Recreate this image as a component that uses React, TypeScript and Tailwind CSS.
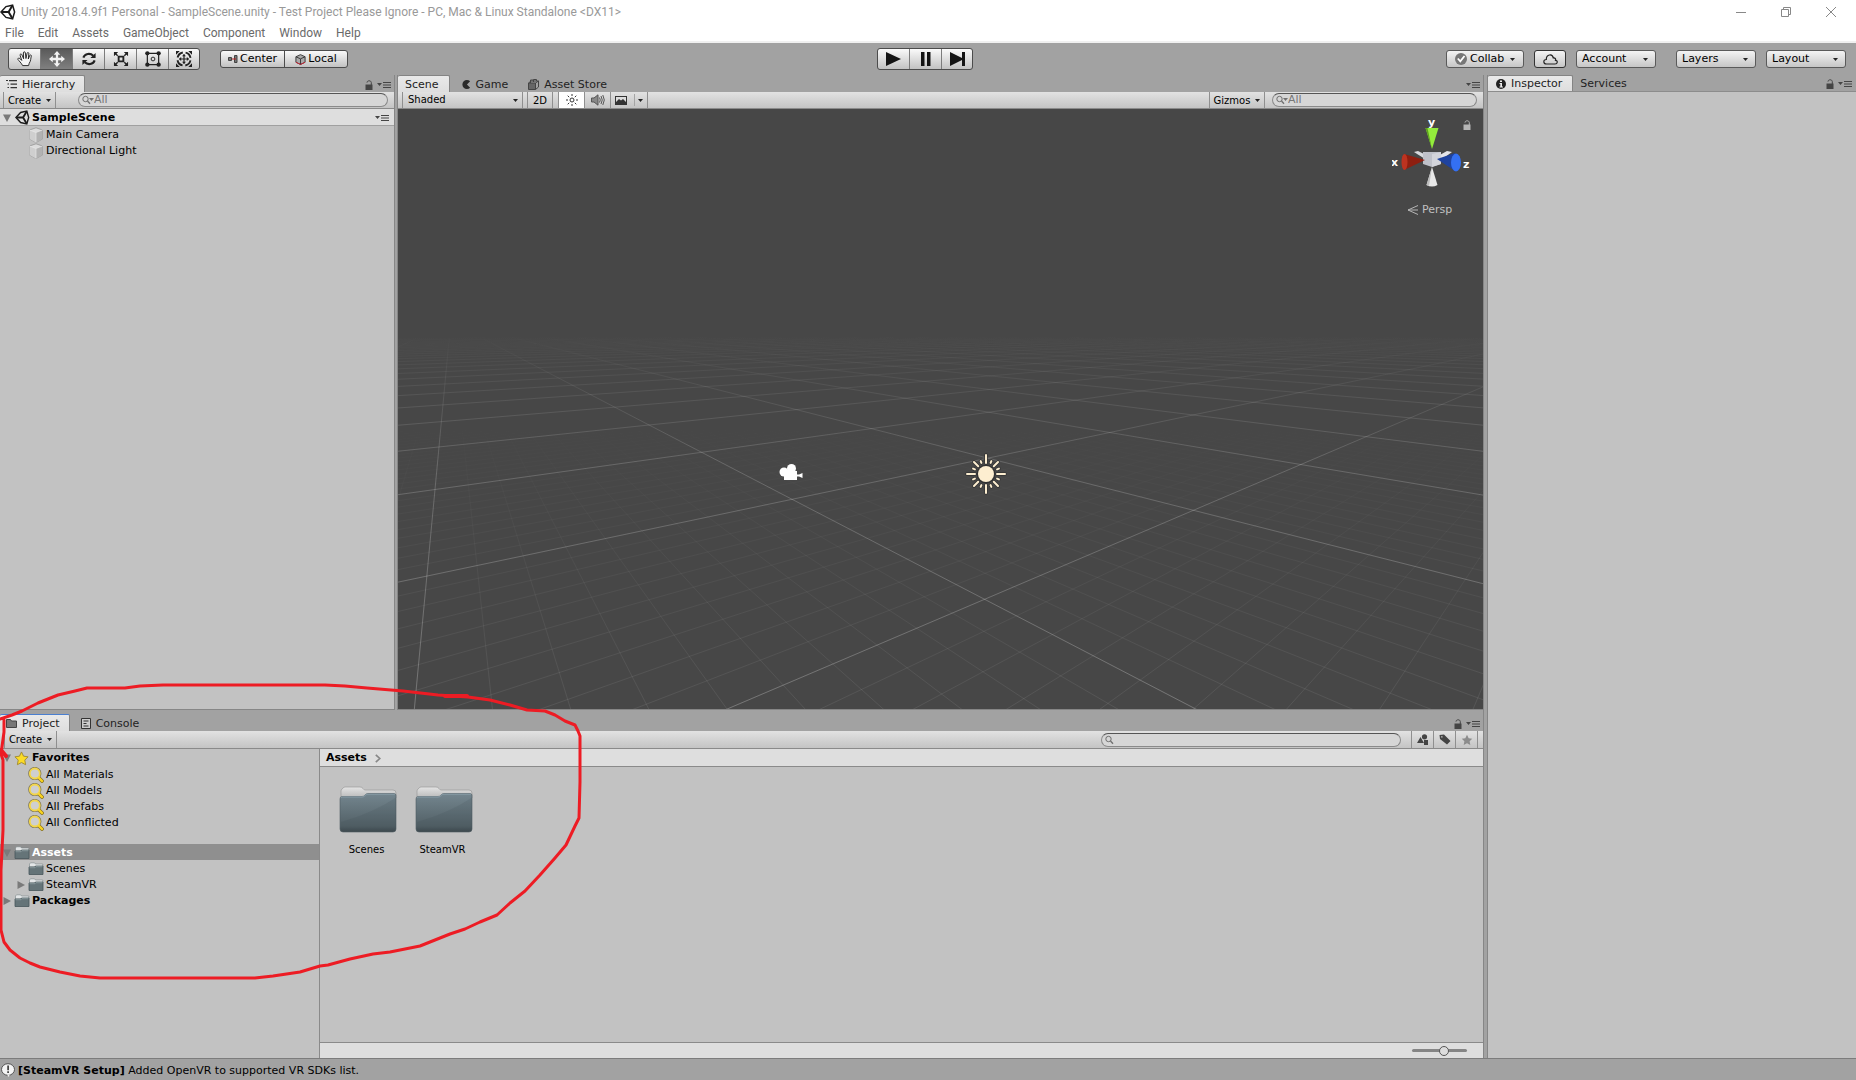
import { useState } from "react";
import type { ReactNode } from "react";
import clsx from "clsx";

const menus = ["File", "Edit", "Assets", "GameObject", "Component", "Window", "Help"];

const favorites = ["All Materials", "All Models", "All Prefabs", "All Conflicted"];

/* ---------- icons ---------- */

function UnityLogo({ className }: { className?: string }) {
  return (
    <svg viewBox="0 0 16 16" className={className} fill="none" stroke="#1c1c1c">
      <path d="M1 8 6 2.6 12.6 1.2 14.6 8l-2 6.8L6 13.4z" strokeWidth="1.5" />
      <path d="M2 8h6.6M8.6 8l3.8-6.4M8.6 8l3.8 6.4" strokeWidth="2" />
    </svg>
  );
}

function Lock({ className }: { className?: string }) {
  return (
    <svg viewBox="0 0 8 10" className={clsx("h-[10px] w-2", className)}>
      <path d="M0.5 4.5h7V10h-7z" fill="currentColor" />
      <path d="M2 2.6C2 .2 6.3 .2 6.3 2.6V5" fill="none" stroke="currentColor" />
    </svg>
  );
}

function PaneMenu() {
  return (
    <svg viewBox="0 0 14 8" className="h-2 w-[14px]" fill="#444">
      <path d="M0 2h5L2.5 5zM6 1h8v1H6zM6 3.5h8v1H6zM6 6h8v1H6z" />
    </svg>
  );
}

function Caret() {
  return (
    <svg viewBox="0 0 5 3" className="h-[3px] w-[5px] shrink-0" fill="#222">
      <path d="M0 0h5L2.5 3z" />
    </svg>
  );
}

function Foldout({ open }: { open?: boolean }) {
  return (
    <svg viewBox="0 0 10 10" className="size-[10px] shrink-0" fill="#7a7a7a">
      {open ? <path d="M1 1.5h8L5 9z" /> : <path d="M1.5 1 9 5 1.5 9z" />}
    </svg>
  );
}

function Cube() {
  return (
    <svg viewBox="0 0 16 16" className="size-4 shrink-0">
      <path d="M8 .8 14.5 3v9L8 15.5 1.5 12V3z" fill="#dcdcdc" stroke="#8b8b8b" strokeWidth=".7" />
      <path d="M1.5 3 8 5.5V15.5L1.5 12z" fill="#cfcfcf" />
      <path d="M14.5 3 8 5.5V15.5L14.5 12z" fill="#b2b2b2" />
      <path d="M1.5 3 8 5.5 14.5 3M8 5.5v10" stroke="#ececec" strokeWidth=".6" fill="none" />
    </svg>
  );
}

function SmallFolder() {
  return (
    <svg viewBox="0 0 16 14" className="h-[14px] w-4 shrink-0">
      <path d="M1.5 4V2l1-1.2h4L7.5 2h7.300v3H1.500z" fill="#e3e6e7" stroke="#7b8588" strokeWidth=".6" />
      <path d="M1 5h5.500l1-1H15V12.500H1z" fill="#657478" stroke="#47555a" strokeWidth=".8" />
      <path d="M1.500 5.700h5.500l1-1h6.500" stroke="#92a1a5" strokeWidth=".8" fill="none" />
    </svg>
  );
}

function BigFolder() {
  return (
    <svg viewBox="0 0 58 48" className="h-12 w-[58px]">
      <defs>
        <linearGradient id="folderBody" x1="0" y1="0" x2="0" y2="1">
          <stop offset="0" stopColor="#74868f" />
          <stop offset=".85" stopColor="#526066" />
          <stop offset="1" stopColor="#3d484d" />
        </linearGradient>
        <linearGradient id="folderTab" x1="0" y1="0" x2="0" y2="1">
          <stop offset="0" stopColor="#e4e4e4" />
          <stop offset="1" stopColor="#b9b9b9" />
        </linearGradient>
      </defs>
      <path d="M2 11V5q0-1 1-2l1-1q1-1 2-1h15q2 0 3 1.5L25.5 4H54q3 0 3 3v5H2z" fill="url(#folderTab)" stroke="#9b9b9b" strokeWidth=".7" />
      <path d="M1 13q0-2.5 2-2.5h20q2 0 3-1.5t3-1.5h26q2 0 2 2V43q0 3-3 3H4q-3 0-3-3z" fill="url(#folderBody)" stroke="#4d5b61" strokeWidth=".6" />
      <path d="M57 11.5V43q0 2-2 2H4q-2 0-2-2v-7Q34 27 57 11.5z" fill="#3b474c" opacity=".14" />
      <path d="M2 12q0-1 1.5-1H23q2 0 3-1.5T29 8.2h27" fill="none" stroke="#8fa5b0" strokeWidth=".8" />
    </svg>
  );
}

function Star({ className, fill, stroke }: { className?: string; fill: string; stroke?: string }) {
  return (
    <svg viewBox="0 0 16 16" className={className}>
      <path d="M8 1l2.2 4.5 4.8.7-3.5 3.5.9 4.9L8 12.3l-4.4 2.3.9-4.9L1 6.2l4.8-.7z" fill={fill} stroke={stroke} strokeLinejoin="round" />
    </svg>
  );
}

function Magnifier() {
  return (
    <svg viewBox="0 0 16 16" className="size-4 shrink-0" fill="none">
      <path d="M10.5 10.5 14 14" stroke="#8a7420" strokeWidth="3.800" strokeLinecap="round" />
      <circle cx="6.800" cy="6.500" r="5" stroke="#7d7556" strokeWidth="3.200" />
      <path d="M10.500 10.500 14 14" stroke="#fbd51f" strokeWidth="2.400" strokeLinecap="round" />
      <circle cx="6.800" cy="6.500" r="5" stroke="#f3d64a" strokeWidth="1.800" fill="#cfcfcf" />
    </svg>
  );
}

function SearchGlyph({ menu }: { menu?: boolean }) {
  return (
    <svg viewBox="0 0 12 10" className="h-[10px] w-3 shrink-0" fill="none" stroke="#707070">
      <circle cx="3.5" cy="4" r="2.7" />
      <path d="M5.5 6 8 8.8" strokeWidth="1.3" />
      {menu && <path d="M7 3h5L9.5 6z" fill="#707070" stroke="none" />}
    </svg>
  );
}

const toolIcons: { name: string; icon: ReactNode }[] = [
  {
    name: "Hand",
    icon: (
      <path
        d="M6 15.5C4.500 12.500 2 10.500 1 9c-.5-1.300 1-1.900 2-1l2 2L3.300 4.500c-.3-1.500 1.400-1.900 1.900-.5L7 8.200 6.800 2c0-1.500 1.900-1.500 2.100 0l.6 6 1.200-5.600c.4-1.300 2-.9 1.900.5L12 8.500l1.500-3.700c.6-1.200 2-.6 1.700.6C14.500 8 14.800 10.500 13 13l-.7 2.500z"
        fill="#f4f4f4"
        stroke="#222"
        strokeWidth="1"
      />
    ),
  },
  {
    name: "Move",
    icon: <path d="M8.5 0 12 4H9.7v3.300H13V5l4 3.500L13 12V9.700H9.700V13H12l-3.500 4L5 13h2.300V9.700H4V12L0 8.500 4 5v2.300h3.300V4H5z" fill="#f2f2f2" />,
  },
  {
    name: "Rotate",
    icon: (
      <g fill="none" stroke="#222" strokeWidth="2.2">
        <path d="M2.500 7C4 2.500 10 2 13 5M14.500 10C13 14.500 7 15 4 12" />
        <path d="M15.500 2v5.500H10zM1.500 15V9.500H7z" fill="#222" stroke="none" />
      </g>
    ),
  },
  {
    name: "Scale",
    icon: (
      <g fill="none" stroke="#222">
        <path d="M6 6h5v5H6z" strokeWidth="2" />
        <path d="M2 2l3 3M15 2l-3 3M2 15l3-3M15 15l-3-3" strokeWidth="1.5" />
        <path d="M1 1h4.500L1 5.500zM16 1v4.500L11.500 1zM1 16v-4.500L5.500 16zM16 16h-4.500L16 11.500z" fill="#222" stroke="none" />
      </g>
    ),
  },
  {
    name: "Rect",
    icon: (
      <g fill="none" stroke="#222">
        <path d="M2.500 2.500h12v12h-12z" strokeWidth="1.300" />
        <circle cx="8.500" cy="8.500" r="2" />
        <g fill="#222" stroke="none">
          <circle cx="2.500" cy="2.500" r="2.300" />
          <circle cx="14.500" cy="2.500" r="2.300" />
          <circle cx="2.500" cy="14.500" r="2.300" />
          <circle cx="14.500" cy="14.500" r="2.300" />
        </g>
      </g>
    ),
  },
  {
    name: "Transform",
    icon: (
      <g fill="none" stroke="#222">
        <circle cx="8.500" cy="8.500" r="7" strokeWidth="2" strokeDasharray="8 3" strokeDashoffset="-1.500" />
        <path d="M8.500 4v9M4 8.500h9" strokeWidth="1.300" />
        <path d="M8.500 3 10.500 5.500h-4zM8.500 14l2-2.500h-4zM3 8.500 5.500 6.500v4zM14 8.500l-2.500-2v4zM0 0h4L0 4zM17 0v4L13 0zM0 17v-4L4 17zM17 17h-4l4-4z" fill="#222" stroke="none" />
      </g>
    ),
  },
];

/* ---------- scene view ---------- */

// Ground plane projected to the screen. w is the depth term, y = HORIZON + DEPTH / w
const PLANE = { a: 773, b: 254.2, c: 984.6, g: 0.4727, h: 0.564 };
const HORIZON = 322;
const DEPTH = 277.3;

function groundLine(axis: "u" | "v", k: number, near: number, far: number) {
  const { a, b, c, g, h } = PLANE;
  const at = (w: number) => {
    const u = axis === "u" ? k : (w - 1 - h * k) / g;
    const v = axis === "u" ? (w - 1 - g * k) / h : k;
    return `${((a * u + b * v + c) / w).toFixed(1)} ${(HORIZON + DEPTH / w).toFixed(1)}`;
  };
  return `M${at(near)}L${at(far)}`;
}

function range(from: number, to: number) {
  return Array.from({ length: to - from + 1 }, (_, i) => from + i);
}

const majorGrid = [
  ...range(-22, 30).map((k) => groundLine("u", k, 0.68, 18)),
  ...range(-30, 30).map((k) => groundLine("v", k, 0.68, 18)),
].join("");

const minorGrid = [
  ...range(-40, 60).map((k) => groundLine("u", k / 10, 0.68, 3)),
  ...range(-40, 60).map((k) => groundLine("v", k / 10, 0.68, 3)),
].join("");

function SceneCanvas() {
  return (
    <svg viewBox="398 109 1085 600" preserveAspectRatio="xMidYMid slice" className="absolute inset-0 size-full">
      <defs>
        <linearGradient id="majorFade" gradientUnits="userSpaceOnUse" x1="0" y1="335" x2="0" y2="709">
          <stop offset="0" stopColor="#fff" stopOpacity="0" />
          <stop offset=".1" stopColor="#fff" stopOpacity=".05" />
          <stop offset=".35" stopColor="#fff" stopOpacity=".17" />
          <stop offset="1" stopColor="#fff" stopOpacity=".19" />
        </linearGradient>
        <linearGradient id="minorFade" gradientUnits="userSpaceOnUse" x1="0" y1="420" x2="0" y2="709">
          <stop offset="0" stopColor="#fff" stopOpacity="0" />
          <stop offset="1" stopColor="#fff" stopOpacity=".08" />
        </linearGradient>
      </defs>
      <path d={minorGrid} stroke="url(#minorFade)" fill="none" />
      <path d={majorGrid} stroke="url(#majorFade)" fill="none" />

      {/* camera gizmo */}
      <g fill="#fff">
        <circle cx="784" cy="472" r="4.5" />
        <circle cx="791.5" cy="468.5" r="4.5" />
        <path d="M783 471h14v3.500h2l3.500-1.500v5l-3.500-1.500h-2V480h-13v-4z" />
      </g>

      {/* directional light gizmo */}
      <g transform="translate(986 474)" stroke="#fdeed0" strokeWidth="2" strokeLinecap="round">
        <circle r="9.5" fill="#333" stroke="none" />
        <circle r="8" fill="#fdeed0" stroke="none" />
        {range(0, 15).map((i) => {
          const len = i % 4 === 0 ? 19 : i % 2 === 0 ? 17 : 14;
          const from = i % 2 === 0 ? 11 : 12;
          return (
            <g key={i} transform={`rotate(${i * 22.5})`}>
              <path d={`M${from} 0H${len}`} stroke="#333" strokeWidth="3.5" />
              <path d={`M${from} 0H${len}`} />
            </g>
          );
        })}
      </g>
    </svg>
  );
}

function AxisGizmo() {
  return (
    <div className="absolute top-2 right-[3px] w-[88px] text-[#ddd]">
      <svg viewBox="1392 118 88 76" className="h-[76px] w-[88px]">
        <path d="M1414 153l4-1 8 4-1 4z" fill="#d8dade" />
        <path d="M1452 153l-5-1-9 5 3 4z" fill="#e4e4e8" />
        <path d="M1425.5 129h13L1432 150z" fill="#94ec3c" />
        <path d="M1425.5 129h2l4.500 21z" fill="#5ea01f" />
        <path d="M1423 153h18v12l-9 3-9-3z" fill="#bfc1c9" />
        <path d="M1432 155l9-2v12l-9 3z" fill="#d3d4da" />
        <path d="M1432 168l5.500 18q-5.500 3-11 0z" fill="#e9e9e9" />
        <path d="M1432 168l-3 19-2.500-1z" fill="#bcbcbc" />
        <path d="M1425 161l-21-6v16z" fill="#8e1f10" />
        <ellipse cx="1404.500" cy="163" rx="3" ry="8" fill="#bd3320" />
        <path d="M1437 160l18-6v18z" fill="#1f439f" />
        <ellipse cx="1456" cy="163.500" rx="5" ry="9" fill="#3470f2" />
        <g fill="#fff" fontSize="11" fontWeight="700">
          <text x="1428" y="127">y</text>
          <text x="1391" y="167">x</text>
          <text x="1463" y="169">z</text>
        </g>
      </svg>
      <Lock className="absolute top-[3px] right-[9px] text-[#b5b5b5]" />
      <button type="button" className="mt-[9px] ml-4 flex items-center gap-1 text-[11px] text-[#c0c0c0]">
        <svg viewBox="0 0 10 10" className="size-[10px]" fill="none" stroke="#b5b5b5">
          <path d="M10 .5 0 5l10 4.500M0 5h10" />
        </svg>
        Persp
      </button>
    </div>
  );
}

/* ---------- shared pieces ---------- */

const strip = "flex h-[17px] items-center border-b border-[#8a8a8a] bg-linear-to-b from-[#e2e2e2] to-[#c4c4c4]";
const tabRow = "flex h-[17px] items-center bg-[#a2a2a2]";
const treeRow = "flex h-4 items-center pt-[2px]";

function Tab({ active, focused, icon, children }: { active?: boolean; focused?: boolean; icon?: ReactNode; children: ReactNode }) {
  return (
    <button
      type="button"
      role="tab"
      aria-selected={!!active}
      className={clsx(
        "flex h-full items-center gap-[5px] border-t px-[7px] pt-px text-[11px] leading-4 text-[#222]",
        active && "rounded-t-xs border-r bg-linear-to-b from-[#e9e9e9] to-[#dedede]",
        active ? (focused ? "border-[#848484] border-t-[#4a7fd0]" : "border-[#848484]") : "border-transparent",
      )}
    >
      {icon}
      {children}
    </button>
  );
}

function StripButton({ label, children, className }: { label?: string; children: ReactNode; className?: string }) {
  return (
    <button type="button" aria-label={label} className={clsx("flex h-full items-center justify-center border-r border-[#8f8f8f]", className)}>
      {children}
    </button>
  );
}

function SearchField({ label, text, className }: { label: string; text?: string; className?: string }) {
  return (
    <label className={clsx("flex h-[14px] items-center rounded-full border border-[#8a8a8a] border-t-[#555] bg-[#d6d6d6] pl-[3px]", className)}>
      <SearchGlyph menu={!!text} />
      <input aria-label={label} placeholder={text} className="h-3 w-full min-w-0 bg-transparent text-[11px] leading-3 outline-none placeholder:text-[#777]" />
    </label>
  );
}

function Dropdown({ label, className }: { label: string; className?: string }) {
  return (
    <div className={clsx("relative h-[18px] rounded-[3px] border border-[#5a5a5a] bg-linear-to-b from-[#f4f4f4] to-[#c6c6c6]", className)}>
      <select aria-label={label} className="block h-4 w-full appearance-none pl-[5px] text-[11px] leading-4 outline-none">
        <option>{label}</option>
      </select>
      <span className="pointer-events-none absolute inset-y-0 right-[7px] flex items-center">
        <Caret />
      </span>
    </div>
  );
}

/* ---------- panels ---------- */

function Toolbar() {
  const [tool, setTool] = useState("Move");
  const segment = "flex overflow-hidden rounded-[3px] border border-[#4c4c4c] bg-linear-to-b from-[#fafafa] to-[#c2c2c2]";

  return (
    <div className="relative flex h-8 items-start bg-[#a2a2a2] px-2 pt-[5px]">
      <div className={clsx(segment, "h-[22px]")}>
        {toolIcons.map(({ name, icon }) => (
          <button
            key={name}
            type="button"
            aria-label={name}
            onClick={() => setTool(name)}
            className={clsx(
              "flex w-8 items-center justify-center border-r border-[#7c7c7c] last:w-[30px] last:border-r-0",
              tool === name && "bg-linear-to-b from-[#5a5a5a] to-[#808080]",
            )}
          >
            <svg viewBox="0 0 17 17" className="size-4">{icon}</svg>
          </button>
        ))}
      </div>

      <div className={clsx(segment, "mt-[2px] ml-5 h-[18px] text-[11px] leading-4")}>
        <button type="button" className="flex w-16 items-center justify-center gap-[2px] border-r border-[#4c4c4c]">
          <svg viewBox="0 0 10 8" className="h-2 w-[10px]" fill="none" stroke="#444">
            <path d="M.5 2.500h3v3h-3zM6.500.5h2.500v7H6.500z" fill="#777" />
            <path d="M4 4h4" stroke="#b22" />
          </svg>
          Center
        </button>
        <button type="button" className="flex w-[62px] items-center justify-center gap-[2px]">
          <svg viewBox="0 0 12 12" className="size-[11px]" fill="none" stroke="#333">
            <path d="M6 .7 11 3v6L6 11.400 1 9V3z" fill="#aaa" />
            <path d="M1 3l5 2.300L11 3M6 5.500v6" />
            <path d="M1 9l5 2.400L11 9" stroke="#c23" />
          </svg>
          Local
        </button>
      </div>

      <div className={clsx(segment, "absolute top-[5px] left-[calc(50%-51px)] h-[22px]")}>
        <button type="button" aria-label="Play" className="flex w-8 items-center justify-center border-r border-[#7c7c7c]">
          <svg viewBox="0 0 15 14" className="h-[14px] w-[15px]" fill="#141414"><path d="M0 0l15 7-15 7z" /></svg>
        </button>
        <button type="button" aria-label="Pause" className="flex w-8 items-center justify-center border-r border-[#7c7c7c]">
          <svg viewBox="0 0 10 14" className="h-[14px] w-[10px]" fill="#141414"><path d="M0 0h3.500v14H0zM6 0h3.500v14H6z" /></svg>
        </button>
        <button type="button" aria-label="Step" className="flex w-[30px] items-center justify-center">
          <svg viewBox="0 0 15 14" className="h-[14px] w-[15px]" fill="#141414"><path d="M0 0l12 6V0h3v14h-3V8L0 14z" /></svg>
        </button>
      </div>

      <div className="mt-[2px] ml-auto flex gap-[10px] pr-[2px]">
        <button type="button" className="flex h-[18px] w-[78px] items-center gap-[3px] rounded-[3px] border border-[#5a5a5a] bg-linear-to-b from-[#f4f4f4] to-[#c6c6c6] pl-2 text-[11px] leading-4">
          <svg viewBox="0 0 12 12" className="size-3">
            <circle cx="6" cy="6" r="6" fill="#777" />
            <path d="M2.800 5.500l2.500 2.800L9.500 3" fill="none" stroke="#fff" strokeWidth="1.800" />
          </svg>
          Collab
          <span className="ml-[3px]"><Caret /></span>
        </button>
        <button type="button" aria-label="Cloud services" className="flex h-[18px] w-8 items-center justify-center rounded-[3px] border border-[#333] bg-linear-to-b from-[#f4f4f4] to-[#c6c6c6]">
          <svg viewBox="0 0 15 11" className="h-[11px] w-[15px]" fill="none" stroke="#222" strokeWidth="1.2">
            <path d="M3.500 10C0 10 0 5.500 3.300 5.500 3.300 0 9.500-.5 10.300 4 12 3.600 13 5 12.500 6.300 15 6.500 14.800 10 12 10z" />
          </svg>
        </button>
        <Dropdown label="Account" className="w-20" />
        <Dropdown label="Layers" className="ml-[10px] w-20" />
        <Dropdown label="Layout" className="w-20" />
      </div>
    </div>
  );
}

function Hierarchy() {
  return (
    <section aria-label="Hierarchy" className="flex min-w-0 flex-col border-r border-b border-[#868686] bg-[#c2c2c2]">
      <div className={clsx(tabRow, "pr-[3px]")}>
        <Tab
          active
          icon={
            <svg viewBox="0 0 11 9" className="-ml-px h-[9px] w-[11px]" fill="#333">
              <path d="M0 0h2v1H0zM3 0h8v1.200H3zM1.500 3.500h1.500v1H1.500zM4.500 3.500H11v1.200H4.500zM1.500 7H3v1H1.500zM4.500 7H11v1.200H4.500z" />
            </svg>
          }
        >
          <span className="pr-[2px]">Hierarchy</span>
        </Tab>
        <div className="ml-auto flex items-center gap-1 pt-[2px] text-[#444]"><Lock /><PaneMenu /></div>
      </div>
      <div className={strip}>
        <StripButton className="ml-[3px] w-[53px] gap-[5px] border-l text-[10px]">
          Create <Caret />
        </StripButton>
        <SearchField label="Search hierarchy" text="All" className="mr-[6px] ml-[22px] flex-1" />
      </div>
      <div className="flex h-[17px] items-center border-b border-[#a0a0a0] bg-[#dedede] pt-px pr-[5px] pl-[2px]">
        <Foldout open />
        <UnityLogo className="ml-[3px] size-[15px]" />
        <span className="ml-[2px] text-[11px] leading-4 font-bold">SampleScene</span>
        <span className="ml-auto"><PaneMenu /></span>
      </div>
      <ul className="text-[11px] leading-4">
        {["Main Camera", "Directional Light"].map((name) => (
          <li key={name} className={clsx(treeRow, "gap-[2px] pl-7")}><Cube />{name}</li>
        ))}
      </ul>
    </section>
  );
}

function Scene() {
  return (
    <section aria-label="Scene" className="flex min-w-0 flex-col border-r border-b border-l border-[#868686]">
      <div className={clsx(tabRow, "pr-[3px]")}>
        <Tab active><span className="pr-[3px]">Scene</span></Tab>
        <span className="w-[5px]" />
        <Tab
          icon={
            <svg viewBox="0 0 10 10" className="size-[9px]" fill="#2a2a2a"><path d="M9 1.500A5 5 0 1 0 9 8.500L5.500 5z" /></svg>
          }
        >
          Game
        </Tab>
        <span className="w-[6px]" />
        <Tab
          icon={
            <svg viewBox="0 0 11 11" className="size-[11px]" fill="none" stroke="#444">
              <path d="M.5 4h7v6.500h-7z" fill="#666" />
              <path d="M.5 4 3 2h7.500v6L7.500 10.500M7.500 4l3-2M2.500 4V1h3v2M5.500 2V.5h3V2" />
            </svg>
          }
        >
          Asset Store
        </Tab>
        <span className="ml-auto pt-[2px]"><PaneMenu /></span>
      </div>
      <div className={strip}>
        <div className="relative ml-1 h-full w-[121px] border-r border-l border-[#8f8f8f]">
          <select aria-label="Draw mode" className="block h-4 w-full appearance-none pl-[5px] text-[10px] leading-4 outline-none">
            <option>Shaded</option>
          </select>
          <span className="pointer-events-none absolute inset-y-0 right-1 flex items-center"><Caret /></span>
        </div>
        <StripButton className="ml-1 w-[26px] border-l text-[10px]">2D</StripButton>
        <StripButton label="Scene lighting" className="ml-[5px] w-[27px] border-l bg-white">
          <svg viewBox="0 0 12 12" className="size-3" fill="none" stroke="#333">
            <circle cx="6" cy="6" r="2" />
            <path d="M6 0v2M6 10v2M0 6h2M10 6h2M1.700 1.700l1.500 1.500M8.800 8.800l1.500 1.500M1.700 10.300l1.500-1.500M8.800 3.200l1.500-1.500" />
          </svg>
        </StripButton>
        <StripButton label="Scene audio" className="w-[26px]">
          <svg viewBox="0 0 14 12" className="h-3 w-[14px]" fill="none" stroke="#555">
            <path d="M.5 4h2.500L7 .8v10.400L3 8H.5z" fill="#888" />
            <path d="M8.500 3.500q1.500 2.500 0 5M10 2q2.500 4 0 8M11.800 1q3 5 0 10" />
          </svg>
        </StripButton>
        <StripButton label="Scene effects" className="w-[37px] gap-[7px]">
          <svg viewBox="0 0 12 9" className="h-[9px] w-3">
            <path d="M0 0h12v9H0z" fill="#333" />
            <path d="M1 6l3-3 2 1.500L8 3l3 3V1H1z" fill="#ddd" />
          </svg>
          <span className="flex h-3 items-center border-l border-[#a5a5a5] pl-[3px]"><Caret /></span>
        </StripButton>
        <StripButton className="ml-auto w-14 gap-[5px] border-l text-[10px]">
          Gizmos <Caret />
        </StripButton>
        <SearchField label="Search scene" text="All" className="mr-[6px] ml-[7px] w-[205px]" />
      </div>
      <div className="relative flex-1 overflow-hidden bg-[#474747]">
        <SceneCanvas />
        <AxisGizmo />
      </div>
    </section>
  );
}

function ProjectTree() {
  return (
    <nav className="border-r border-[#8a8a8a] text-[11px] leading-4">
      <div className="flex h-[17px] items-center pt-px pl-[2px] font-bold">
        <Foldout open />
        <Star className="mr-[3px] ml-[2px] size-[15px]" fill="#fcdc26" stroke="#a08a30" />
        Favorites
      </div>
      <ul>
        {favorites.map((name) => (
          <li key={name} className={clsx(treeRow, "gap-[2px] pl-7")}><Magnifier />{name}</li>
        ))}
      </ul>
      <div className={clsx(treeRow, "mt-[14px] bg-[#8f8f8f] pl-[2px] font-bold text-white")}>
        <Foldout open />
        <span className="mx-[2px]"><SmallFolder /></span>
        Assets
      </div>
      <div className={clsx(treeRow, "gap-[2px] pl-7")}><SmallFolder />Scenes</div>
      <div className={clsx(treeRow, "gap-[2px] pl-4")}>
        <Foldout />
        <SmallFolder />SteamVR
      </div>
      <div className={clsx(treeRow, "pl-[2px] font-bold")}>
        <Foldout />
        <span className="mx-[2px]"><SmallFolder /></span>
        Packages
      </div>
    </nav>
  );
}

function Project() {
  return (
    <section aria-label="Project" className="flex h-[348px] flex-col border-r border-[#868686] bg-[#c2c2c2]">
      <div className="bg-[#a2a2a2] pt-1">
        <div className={clsx(tabRow, "pr-[3px]")}>
          <Tab
            active
            focused
            icon={
              <svg viewBox="0 0 11 9" className="-ml-px h-[9px] w-[11px]"><path d="M.5 8.500v-8h4l1 1.500h5v6.500z" fill="#777" stroke="#444" /></svg>
            }
          >
            <span className="pr-[2px]">Project</span>
          </Tab>
          <span className="w-1" />
          <Tab
            icon={
              <svg viewBox="0 0 10 11" className="h-[11px] w-[10px]" fill="#ccc" stroke="#333">
                <path d="M.5.5h9v10h-9zM2.500 3h5M2.500 5.500h3M2.500 8h5" />
              </svg>
            }
          >
            Console
          </Tab>
          <div className="ml-auto flex items-center gap-1 pt-[2px] text-[#444]"><Lock /><PaneMenu /></div>
        </div>
      </div>
      <div className="flex h-[18px] items-center border-b border-[#8a8a8a] bg-linear-to-b from-[#e2e2e2] to-[#c4c4c4]">
        <StripButton className="ml-1 w-[53px] gap-[5px] border-l text-[10px]">
          Create <Caret />
        </StripButton>
        <SearchField label="Search project" className="mr-[10px] ml-auto w-[300px]" />
        <StripButton label="Search by type" className="w-[23px] border-l">
          <svg viewBox="0 0 12 11" className="h-[11px] w-3" fill="#444"><path d="M0 9 3.500 3 7 9zM7 6h4v5H7z" /><circle cx="7.500" cy="2.800" r="2.600" /></svg>
        </StripButton>
        <StripButton label="Search by label" className="w-[22px]">
          <svg viewBox="0 0 12 11" className="h-[11px] w-3" fill="#444"><path fillRule="evenodd" d="M.5 1 5 .5 11.500 7 8 10.500 1 5zM2.200 2.200v1.300h1.300V2.200z" /></svg>
        </StripButton>
        <StripButton label="Save search" className="mr-[5px] w-[22px]">
          <Star className="size-3" fill="#8c8c8c" />
        </StripButton>
      </div>
      <div className="grid flex-1 grid-cols-[320fr_1163fr]">
        <ProjectTree />
        <div className="flex flex-col">
          <div className="flex h-[18px] items-center gap-2 border-b border-[#8a8a8a] bg-[#dedede] pt-px pl-[6px] text-[11px] leading-4 font-bold">
            Assets
            <svg viewBox="0 0 6 9" className="h-[9px] w-[6px]" fill="none" stroke="#888" strokeWidth="1.7"><path d="M.8.8l4 3.700-4 3.700" /></svg>
          </div>
          <div className="flex flex-1 gap-[18px] pt-[19px] pl-[19px]">
            {["Scenes", "SteamVR"].map((name) => (
              <figure key={name} className="flex w-[58px] flex-col items-center">
                <BigFolder />
                <figcaption className="mt-2 pr-[3px] text-[10px] leading-4">{name}</figcaption>
              </figure>
            ))}
          </div>
          <div className="flex h-4 items-center justify-end border-t border-[#8a8a8a] bg-[#dedede] pr-4">
            <input
              type="range"
              aria-label="Icon size"
              defaultValue={60}
              className="h-[10px] w-[55px] appearance-none bg-transparent [&::-webkit-slider-runnable-track]:h-[3px] [&::-webkit-slider-runnable-track]:rounded-full [&::-webkit-slider-runnable-track]:bg-[#858585] [&::-webkit-slider-thumb]:-mt-[3px] [&::-webkit-slider-thumb]:size-[10px] [&::-webkit-slider-thumb]:appearance-none [&::-webkit-slider-thumb]:rounded-full [&::-webkit-slider-thumb]:border [&::-webkit-slider-thumb]:border-[#555] [&::-webkit-slider-thumb]:bg-[#dcdcdc]"
            />
          </div>
        </div>
      </div>
    </section>
  );
}

function Inspector() {
  return (
    <section aria-label="Inspector" className="flex flex-col border-l border-[#868686] bg-[#c2c2c2]">
      <div className={clsx(tabRow, "border-b border-[#8c8c8c] pr-1")}>
        <Tab
          active
          icon={
            <svg viewBox="0 0 10 10" className="ml-px size-[10px]">
              <circle cx="5" cy="5" r="5" fill="#222" />
              <path d="M4 1.500h2v1.500H4zM3.500 4H6v3.500h1v1H3.500v-1h.8V5h-.8z" fill="#eee" />
            </svg>
          }
        >
          <span className="pr-[3px]">Inspector</span>
        </Tab>
        <Tab>Services</Tab>
        <div className="ml-auto flex items-center gap-1 pt-[2px] text-[#444]"><Lock /><PaneMenu /></div>
      </div>
    </section>
  );
}

// hand drawn ring around the project window
function Marker() {
  return (
    <svg viewBox="0 0 1856 1080" className="pointer-events-none absolute inset-0 size-full" fill="none" stroke="#ed1c24" strokeWidth="3" strokeLinejoin="round" strokeLinecap="round">
      <path d="M0 719 12 715 22 711 38 703 48 699 58 695 75 691 87 688 125 688 140 686 163 685 325 685 345 686 367 688 403 691 438 695 468 697 490 700 510 705 527 710 545 711 555 715 565 721 575 725 578 731 580 736V782L579 818 575 826 566 845 555 858 540 875 525 891 510 903 497 915 480 922 465 929 450 934 420 946 390 952 373 954 350 959 328 965 320 966 300 972 273 976 255 978H100L80 976 60 972 40 967 30 963 20 958 10 950 4 942 1 930V870L3 830V760L1 754 4 732V720" />
      <path d="M445 696h22M1 750l5 6" strokeWidth="4" />
    </svg>
  );
}

export default function App() {
  return (
    <div className="relative flex min-h-screen flex-col overflow-hidden bg-[#a2a2a2] font-['DejaVu_Sans',sans-serif] text-black">
      <header className="border-b-2 border-[#f0f0f0] bg-white font-[Roboto,sans-serif] text-[12px]">
        <div className="flex h-6 items-center pr-5 text-[#999]">
          <UnityLogo className="mr-[5px] size-4" />
          <h1>Unity 2018.4.9f1 Personal - SampleScene.unity - Test Project Please Ignore - PC, Mac &amp; Linux Standalone &lt;DX11&gt;</h1>
          <div className="ml-auto flex gap-[35px]">
            <button type="button" aria-label="Minimize">
              <svg viewBox="0 0 10 10" className="size-[10px]" stroke="#888"><path d="M0 5.500h10" /></svg>
            </button>
            <button type="button" aria-label="Restore">
              <svg viewBox="0 0 10 10" className="size-[10px]" fill="none" stroke="#888"><path d="M.5 2.500h7v7h-7zM2.500 2.500v-2h7v7h-2" /></svg>
            </button>
            <button type="button" aria-label="Close">
              <svg viewBox="0 0 10 10" className="size-[10px]" stroke="#888"><path d="M0 0l10 10M10 0 0 10" /></svg>
            </button>
          </div>
        </div>
        <nav className="flex h-[17px] items-center gap-[14px] pl-[5px] leading-4 text-[#6a6a6a]">
          {menus.map((m) => (
            <button key={m} type="button">{m}</button>
          ))}
        </nav>
      </header>

      <Toolbar />

      <main className="grid flex-1 grid-cols-[1484fr_369fr] gap-[3px]">
        <div className="flex flex-col">
          <div className="grid flex-1 grid-cols-[395fr_1087fr] gap-[2px]">
            <Hierarchy />
            <Scene />
          </div>
          <Project />
        </div>
        <Inspector />
      </main>

      <footer className="flex h-[22px] items-center gap-[2px] border-t border-[#7c7c7c] pt-[3px] text-[11px] leading-4">
        <svg viewBox="0 0 15 14" className="mb-[2px] ml-[1px] h-[14px] w-[15px]">
          <ellipse cx="7" cy="6.500" rx="6.500" ry="5.800" fill="#f4f4f4" stroke="#555" />
          <path d="M6 11.500l1.500 2.500L9 11.500z" fill="#eee" />
          <path d="M6.300 2.500h1.600v4.800H6.300zM6.300 8.300h1.600v1.600H6.300z" fill="#333" />
        </svg>
        <p><b>[SteamVR Setup]</b> Added OpenVR to supported VR SDKs list.</p>
      </footer>

      <Marker />
    </div>
  );
}
